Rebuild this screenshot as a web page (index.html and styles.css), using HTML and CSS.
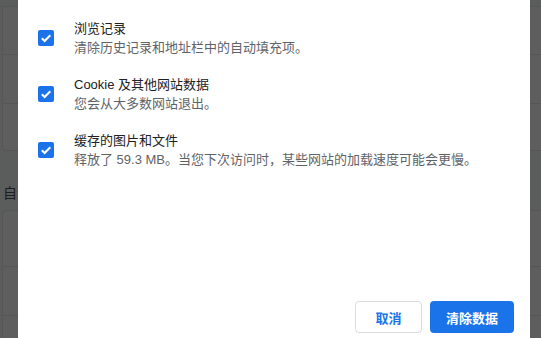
FILE: index.html
```html
<!DOCTYPE html>
<html lang="zh-CN">
<head>
    <meta charset="UTF-8">
    <meta name="viewport" content="width=device-width, initial-scale=1.0">
    <title>清除浏览数据</title>
    <link rel="stylesheet" href="styles.css">
</head>
<body>

    <!-- settings page behind the scrim -->
    <div class="page">
        <div class="card first">
            <div class="card-row r1"></div>
            <div class="card-row r2"></div>
            <div class="card-row r3"></div>
        </div>
        <h2 class="section-title">自动填充</h2>
        <div class="card last">
            <div class="card-row r4"></div>
            <div class="card-row r2"></div>
            <div class="card-row r5"></div>
        </div>
    </div>

    <div class="dialog">
        <div class="dialog-body">
            <div class="option">
                <svg class="checkbox" width="16" height="16" viewBox="0 0 16 16">
                    <rect width="16" height="16" rx="2" fill="#1a73e8"/>
                    <path d="M3.8 8.3 L6.6 11 L12.3 5.2" fill="none" stroke="#fff" stroke-width="2"/>
                </svg>
                <div class="option-text">
                    <div class="option-title">浏览记录</div>
                    <div class="option-desc">清除历史记录和地址栏中的自动填充项。</div>
                </div>
            </div>
            <div class="option">
                <svg class="checkbox" width="16" height="16" viewBox="0 0 16 16">
                    <rect width="16" height="16" rx="2" fill="#1a73e8"/>
                    <path d="M3.8 8.3 L6.6 11 L12.3 5.2" fill="none" stroke="#fff" stroke-width="2"/>
                </svg>
                <div class="option-text">
                    <div class="option-title">Cookie 及其他网站数据</div>
                    <div class="option-desc">您会从大多数网站退出。</div>
                </div>
            </div>
            <div class="option">
                <svg class="checkbox" width="16" height="16" viewBox="0 0 16 16">
                    <rect width="16" height="16" rx="2" fill="#1a73e8"/>
                    <path d="M3.8 8.3 L6.6 11 L12.3 5.2" fill="none" stroke="#fff" stroke-width="2"/>
                </svg>
                <div class="option-text">
                    <div class="option-title">缓存的图片和文件</div>
                    <div class="option-desc">释放了 59.3 MB。当您下次访问时，某些网站的加载速度可能会更慢。</div>
                </div>
            </div>
        </div>
        <div class="dialog-footer">
            <button class="btn btn-cancel">取消</button>
            <button class="btn btn-primary">清除数据</button>
        </div>
    </div>

</body>
</html>
```

FILE: styles.css
```css
  body {
      font-family: "Liberation Sans", "Noto Sans CJK SC", sans-serif;
      background-color: #5b5c5c;
      margin: 0;
      height: 338px;
      overflow: hidden;
      position: relative;
  }
  .page {
      padding-top: 6px;
      padding-left: 2px;
  }
  .card {
      background-color: #5e5e5e;
      border: 1px solid #565656;
      border-right: none;
      border-radius: 4px 0 0 4px;
  }
  .card.first {
      border-top-left-radius: 0;
  }
  .card.last {
      border-bottom: none;
      border-bottom-left-radius: 0;
  }
  .card-row {
      border-bottom: 1px solid #565656;
  }
  .card-row:last-child {
      border-bottom: none;
  }
  .r1 { height: 47px; }
  .r2 { height: 48px; }
  .r3 { height: 46px; }
  .r4 { height: 55px; }
  .r5 { height: 21px; }
  .section-title {
      margin: 0;
      padding: 0 0 0 1px;
      height: 59px;
      line-height: 85px;
      font-size: 14px;
      font-weight: normal;
      color: #1d1d1d;
  }
  .dialog {
      position: absolute;
      left: 18px;
      top: 0;
      width: 512px;
      height: 338px;
      background-color: #fff;
      display: flex;
      flex-direction: column;
  }
  .dialog-body {
      flex: 1;
      padding: 19px 20px 0 20px;
  }
  .option {
      display: flex;
      align-items: center;
      gap: 20px;
      margin-bottom: 18px;
  }
  .checkbox {
      flex: none;
  }
  .option-text {
      font-size: 13px;
      line-height: 19px;
  }
  .option-title {
      color: #202124;
  }
  .option-desc {
      color: #5f6368;
  }
  .dialog-footer {
      display: flex;
      justify-content: flex-end;
      gap: 8px;
      padding: 0 16px 5px 0;
  }
  .btn {
      height: 32px;
      font-family: inherit;
      font-size: 13px;
      font-weight: bold;
      border-radius: 4px;
      cursor: pointer;
  }
  .btn-cancel {
      background-color: #fff;
      color: #1a73e8;
      border: 1px solid #dadce0;
      width: 67px;
      padding: 0;
  }
  .btn-primary {
      background-color: #1a73e8;
      color: #fff;
      border: none;
      width: 84px;
      padding: 0;
  }
```
